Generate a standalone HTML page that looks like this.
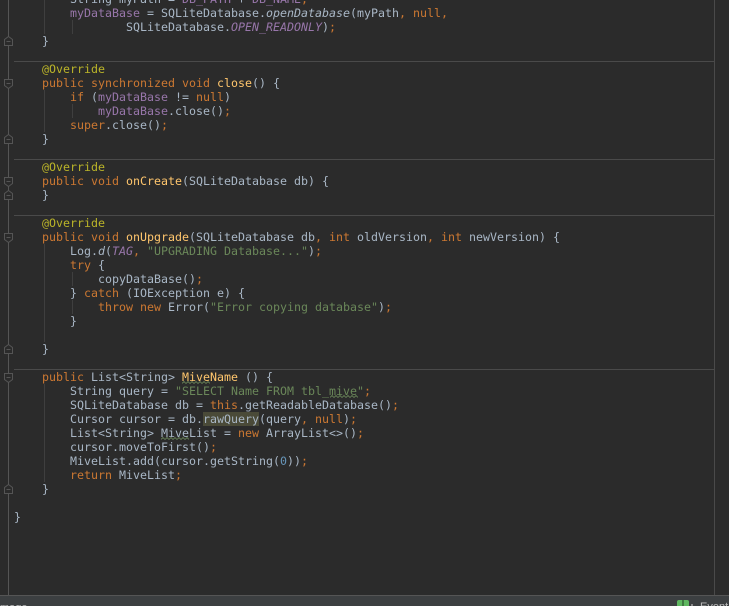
<!DOCTYPE html>
<html>
<head>
<meta charset="utf-8">
<style>
html,body{margin:0;padding:0;width:729px;height:606px;overflow:hidden;background:#2b2b2b}
#e{position:absolute;left:0;top:0;width:729px;height:606px;overflow:hidden;background:#2b2b2b}
.l{position:absolute;left:14px;height:14px;line-height:14px;white-space:pre;font-family:"DejaVu Sans Mono","Liberation Mono",monospace;font-size:11.63px;color:#a9b7c6}
.k{color:#cc7832}.s{color:#6a8759}.a{color:#bbb529}.f{color:#9876aa}.m{color:#ffc66d}.n{color:#6897bb}.i{font-style:italic}
.h{background:#4a4a38}
.sep{position:absolute;left:14px;width:700px;height:1px;background:#4a4a4a}
.g{position:absolute;width:1px;background:#3f3f3f}
svg.fold{position:absolute;left:4px;width:9px;height:10px}
svg.w{position:absolute;width:28px;height:3px}
#st{position:absolute;left:0;top:595px;width:729px;height:11px;background:#3c3f41;border-top:1px solid #555;box-sizing:border-box;overflow:hidden}
#st span{position:absolute;top:5px;font:11px/13px "Liberation Sans",sans-serif;color:#bbb}
</style>
</head>
<body>
<div id="e">
<div class="g" style="left:8px;top:0;height:595px;background:#555"></div>
<div class="g" style="left:714px;top:0;height:595px;background:#4a4a4a"></div>
<div class="sep" style="top:61px"></div>
<div class="sep" style="top:159px"></div>
<div class="sep" style="top:215px"></div>
<div class="sep" style="top:369px"></div>
<div class="g" style="left:44px;top:0;height:34px"></div>
<div class="g" style="left:72px;top:20px;height:14px"></div>
<div class="g" style="left:44px;top:90px;height:42px"></div>
<div class="g" style="left:72px;top:104px;height:14px"></div>
<div class="g" style="left:44px;top:244px;height:98px"></div>
<div class="g" style="left:72px;top:272px;height:14px"></div>
<div class="g" style="left:72px;top:300px;height:14px"></div>
<div class="g" style="left:44px;top:384px;height:98px"></div>
<svg class="fold" style="top:36px" viewBox="0 0 9 10"><path d="M.5 9.5V3.5L4.5.5 8.5 3.5V9.5Z M2.5 5.5H6.5" fill="#2b2b2b" stroke="#555"/></svg>
<svg class="fold" style="top:79px" viewBox="0 0 9 10"><path d="M.5.5V6.5L4.5 9.5 8.5 6.5V.5Z M2.5 4.5H6.5" fill="#2b2b2b" stroke="#555"/></svg>
<svg class="fold" style="top:134px" viewBox="0 0 9 10"><path d="M.5 9.5V3.5L4.5.5 8.5 3.5V9.5Z M2.5 5.5H6.5" fill="#2b2b2b" stroke="#555"/></svg>
<svg class="fold" style="top:177px" viewBox="0 0 9 10"><path d="M.5.5V6.5L4.5 9.5 8.5 6.5V.5Z M2.5 4.5H6.5" fill="#2b2b2b" stroke="#555"/></svg>
<svg class="fold" style="top:190px" viewBox="0 0 9 10"><path d="M.5 9.5V3.5L4.5.5 8.5 3.5V9.5Z M2.5 5.5H6.5" fill="#2b2b2b" stroke="#555"/></svg>
<svg class="fold" style="top:233px" viewBox="0 0 9 10"><path d="M.5.5V6.5L4.5 9.5 8.5 6.5V.5Z M2.5 4.5H6.5" fill="#2b2b2b" stroke="#555"/></svg>
<svg class="fold" style="top:344px" viewBox="0 0 9 10"><path d="M.5 9.5V3.5L4.5.5 8.5 3.5V9.5Z M2.5 5.5H6.5" fill="#2b2b2b" stroke="#555"/></svg>
<svg class="fold" style="top:373px" viewBox="0 0 9 10"><path d="M.5.5V6.5L4.5 9.5 8.5 6.5V.5Z M2.5 4.5H6.5" fill="#2b2b2b" stroke="#555"/></svg>
<svg class="fold" style="top:484px" viewBox="0 0 9 10"><path d="M.5 9.5V3.5L4.5.5 8.5 3.5V9.5Z M2.5 5.5H6.5" fill="#2b2b2b" stroke="#555"/></svg>

<div class="l" style="top:-8px">        String myPath = <span class="f">DB_PATH</span> + <span class="f">DB_NAME</span><span class="k">;</span></div>
<div class="l" style="top:6px">        <span class="f">myDataBase</span> = SQLiteDatabase.<span class="i">openDatabase</span>(myPath<span class="k">,</span> <span class="k">null,</span></div>
<div class="l" style="top:20px">                SQLiteDatabase.<span class="f i">OPEN_READONLY</span>)<span class="k">;</span></div>
<div class="l" style="top:34px">    }</div>
<div class="l" style="top:62px">    <span class="a">@Override</span></div>
<div class="l" style="top:76px">    <span class="k">public synchronized void</span> <span class="m">close</span>() {</div>
<div class="l" style="top:90px">        <span class="k">if</span> (<span class="f">myDataBase</span> != <span class="k">null</span>)</div>
<div class="l" style="top:104px">            <span class="f">myDataBase</span>.close()<span class="k">;</span></div>
<div class="l" style="top:118px">        <span class="k">super</span>.close()<span class="k">;</span></div>
<div class="l" style="top:132px">    }</div>
<div class="l" style="top:160px">    <span class="a">@Override</span></div>
<div class="l" style="top:174px">    <span class="k">public void</span> <span class="m">onCreate</span>(SQLiteDatabase db) {</div>
<div class="l" style="top:188px">    }</div>
<div class="l" style="top:216px">    <span class="a">@Override</span></div>
<div class="l" style="top:230px">    <span class="k">public void</span> <span class="m">onUpgrade</span>(SQLiteDatabase db<span class="k">, int</span> oldVersion<span class="k">, int</span> newVersion) {</div>
<div class="l" style="top:244px">        Log.<span class="i">d</span>(<span class="f i">TAG</span><span class="k">,</span> <span class="s">"UPGRADING Database..."</span>)<span class="k">;</span></div>
<div class="l" style="top:258px">        <span class="k">try</span> {</div>
<div class="l" style="top:272px">            copyDataBase()<span class="k">;</span></div>
<div class="l" style="top:286px">        } <span class="k">catch</span> (IOException e) {</div>
<div class="l" style="top:300px">            <span class="k">throw new</span> Error(<span class="s">"Error copying database"</span>)<span class="k">;</span></div>
<div class="l" style="top:314px">        }</div>
<div class="l" style="top:342px">    }</div>
<div class="l" style="top:370px">    <span class="k">public</span> List&lt;String&gt; <span class="m">MiveName</span> () {</div>
<div class="l" style="top:384px">        String query = <span class="s">"SELECT Name FROM tbl_mive"</span><span class="k">;</span></div>
<div class="l" style="top:398px">        SQLiteDatabase db = <span class="k">this</span>.getReadableDatabase()<span class="k">;</span></div>
<div class="l" style="top:412px">        Cursor cursor = db.<span class="h">rawQuery</span>(query<span class="k">, null</span>)<span class="k">;</span></div>
<div class="l" style="top:426px">        List&lt;String&gt; MiveList = <span class="k">new</span> ArrayList&lt;&gt;()<span class="k">;</span></div>
<div class="l" style="top:440px">        cursor.moveToFirst()<span class="k">;</span></div>
<div class="l" style="top:454px">        MiveList.add(cursor.getString(<span class="n">0</span>))<span class="k">;</span></div>
<div class="l" style="top:468px">        <span class="k">return</span> MiveList<span class="k">;</span></div>
<div class="l" style="top:482px">    }</div>
<div class="l" style="top:510px">}</div>

<svg class="w" style="left:182px;top:381px" viewBox="0 0 28 3"><path d="M0 2.5L2 .5 4 2.5 6 .5 8 2.5 10 .5 12 2.5 14 .5 16 2.5 18 .5 20 2.5 22 .5 24 2.5 26 .5 28 2.5" fill="none" stroke="#6a8759" stroke-width=".8"/></svg>
<svg class="w" style="left:330px;top:395px" viewBox="0 0 28 3"><path d="M0 2.5L2 .5 4 2.5 6 .5 8 2.5 10 .5 12 2.5 14 .5 16 2.5 18 .5 20 2.5 22 .5 24 2.5 26 .5 28 2.5" fill="none" stroke="#6a8759" stroke-width=".8"/></svg>
<svg class="w" style="left:161px;top:437px" viewBox="0 0 28 3"><path d="M0 2.5L2 .5 4 2.5 6 .5 8 2.5 10 .5 12 2.5 14 .5 16 2.5 18 .5 20 2.5 22 .5 24 2.5 26 .5 28 2.5" fill="none" stroke="#6a8759" stroke-width=".8"/></svg>

<div id="st">
<span style="left:0;top:6px">mage</span>
<div style="position:absolute;left:677px;top:4px;width:12px;height:8px;background:#5fb760;border-radius:2px"></div>
<div style="position:absolute;left:682px;top:4px;width:2px;height:8px;background:#3f7a41"></div>
<div style="position:absolute;left:691px;top:8px;width:2px;height:3px;background:#888"></div>
<span style="left:700px">Event Log</span>
</div>
</div>
</body>
</html>
